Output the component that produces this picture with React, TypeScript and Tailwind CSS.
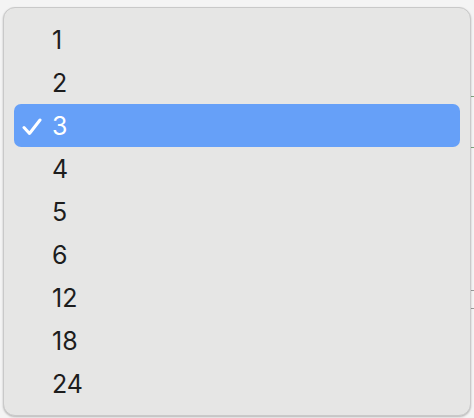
import React from 'react'

const sizes = ['1', '2', '3', '4', '5', '6', '12', '18', '24']
const selected = '3'

function Check() {
  return (
    <svg width="20" height="18" viewBox="0 0 20 18" className="absolute left-[8px] top-[14px]">
      <path d="M2 9.5 L7.5 15.5 L18 2" fill="none" stroke="white" strokeWidth="3" strokeLinecap="round" strokeLinejoin="round" />
    </svg>
  )
}

export default function App() {
  return (
    <div className="relative w-[474px] h-[418px] bg-[#f4f4f4] overflow-hidden font-['Inter',_'Liberation_Sans',_sans-serif]">
      {/* bits of the page behind the menu */}
      <div className="absolute left-[470px] top-[96px] w-[4px] h-[1px] bg-[#7fa27f]" />
      <div className="absolute left-[470px] top-[147px] w-[4px] h-[1px] bg-[#7fa27f]" />
      <div className="absolute left-[470px] top-[290px] w-[4px] h-[1px] bg-[#9a9a9a]" />
      <div className="absolute left-[470px] top-[308px] w-[4px] h-[1px] bg-[#9a9a9a]" />

      <div className="relative ml-[3px] mt-[7px] w-[468px] h-[409px] rounded-[12px] border border-[#c9c9c9] bg-[#e6e6e5] px-[10px] py-[10px] shadow-[0_1px_2px_rgba(0,0,0,0.25)]">
        <ul className="flex flex-col">
          {sizes.map((s) => {
            const on = s === selected
            return (
              <li
                key={s}
                className={
                  on
                    ? 'relative h-[43px] flex items-center pl-[38px] pt-[2px] rounded-[7px] bg-[#66a0f8] text-white text-[25px]'
                    : 'relative h-[43px] flex items-center pl-[38px] pt-[2px] text-[#1d1d1d] text-[25px]'
                }
              >
                {on && <Check />}
                {s}
              </li>
            )
          })}
        </ul>
      </div>
    </div>
  )
}
